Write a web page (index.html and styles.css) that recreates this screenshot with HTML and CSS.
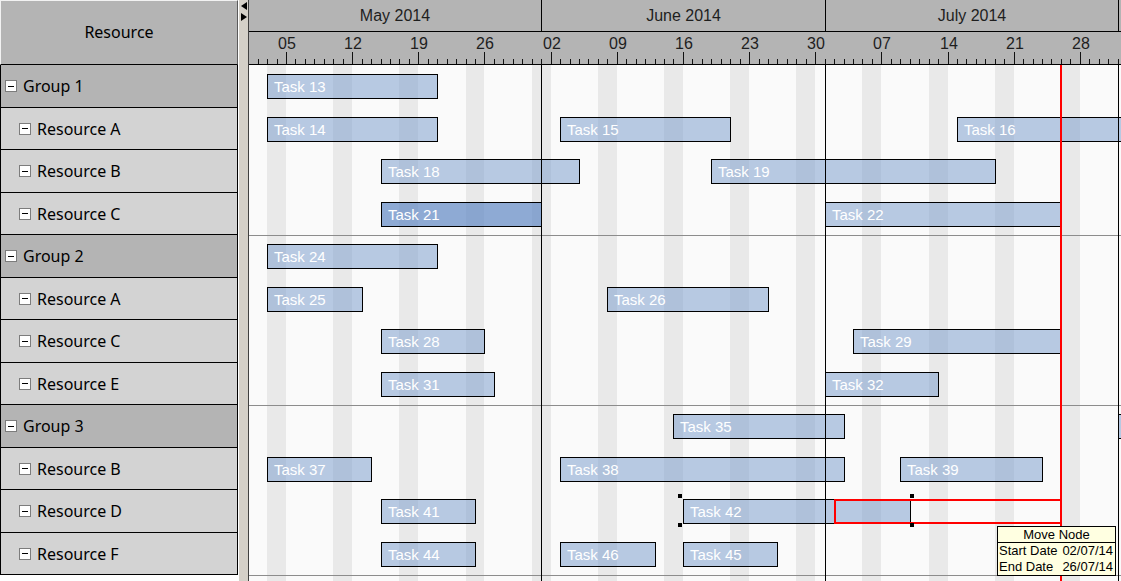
FILE: index.html
```html
<!DOCTYPE html>
<html lang="en">
<head>
<meta charset="utf-8">
<title>Resource Gantt</title>
<link rel="stylesheet" href="styles.css">
</head>
<body>
<div class="gantt">
  <div class="left">
    <div class="left-head">Resource</div>
    <div class="tree">
      <div class="row group"><span class="tog"></span>Group 1</div>
      <div class="row res"><span class="tog"></span>Resource A</div>
      <div class="row res"><span class="tog"></span>Resource B</div>
      <div class="row res"><span class="tog"></span>Resource C</div>
      <div class="row group"><span class="tog"></span>Group 2</div>
      <div class="row res"><span class="tog"></span>Resource A</div>
      <div class="row res"><span class="tog"></span>Resource C</div>
      <div class="row res"><span class="tog"></span>Resource E</div>
      <div class="row group"><span class="tog"></span>Group 3</div>
      <div class="row res"><span class="tog"></span>Resource B</div>
      <div class="row res"><span class="tog"></span>Resource D</div>
      <div class="row res"><span class="tog"></span>Resource F</div>
    </div>
  </div>

  <div class="splitter"><span class="arr arr-l"></span><span class="arr arr-r"></span></div>

  <div class="chart">
    <div class="months">
      <div class="month m-may">May 2014</div>
      <div class="month m-jun">June 2014</div>
      <div class="month m-jul">July 2014</div>
      <div class="month m-aug"></div>
    </div>
    <div class="days">
      <svg class="ticks" width="872" height="32" viewBox="0 0 872 32" shape-rendering="crispEdges">
        <path stroke="#111" stroke-width="1" fill="none" d="M9.5 27v5M18.5 27v5M28.5 27v5M46.5 27v5M56.5 27v5M65.5 27v5M75.5 27v5M84.5 27v5M94.5 27v5M113.5 27v5M122.5 27v5M132.5 27v5M141.5 27v5M150.5 27v5M160.5 27v5M179.5 27v5M188.5 27v5M198.5 27v5M207.5 27v5M217.5 27v5M226.5 27v5M245.5 27v5M254.5 27v5M264.5 27v5M273.5 27v5M283.5 27v5M292.5 27v5M311.5 27v5M321.5 27v5M330.5 27v5M339.5 27v5M349.5 27v5M358.5 27v5M377.5 27v5M387.5 27v5M396.5 27v5M406.5 27v5M415.5 27v5M424.5 27v5M443.5 27v5M453.5 27v5M462.5 27v5M472.5 27v5M481.5 27v5M491.5 27v5M510.5 27v5M519.5 27v5M528.5 27v5M538.5 27v5M547.5 27v5M557.5 27v5M576.5 27v5M585.5 27v5M595.5 27v5M604.5 27v5M613.5 27v5M623.5 27v5M642.5 27v5M651.5 27v5M661.5 27v5M670.5 27v5M680.5 27v5M689.5 27v5M708.5 27v5M717.5 27v5M727.5 27v5M736.5 27v5M746.5 27v5M755.5 27v5M774.5 27v5M784.5 27v5M793.5 27v5M802.5 27v5M812.5 27v5M821.5 27v5M840.5 27v5M850.5 27v5M859.5 27v5M869.5 27v5M37.5 20v12M103.5 20v12M169.5 20v12M235.5 20v12M302.5 20v12M368.5 20v12M434.5 20v12M500.5 20v12M566.5 20v12M632.5 20v12M699.5 20v12M765.5 20v12M831.5 20v12"/>
      </svg>
      <span class="day" style="left:38px">05</span>
      <span class="day" style="left:104px">12</span>
      <span class="day" style="left:170px">19</span>
      <span class="day" style="left:236px">26</span>
      <span class="day" style="left:303px">02</span>
      <span class="day" style="left:369px">09</span>
      <span class="day" style="left:435px">16</span>
      <span class="day" style="left:501px">23</span>
      <span class="day" style="left:567px">30</span>
      <span class="day" style="left:633px">07</span>
      <span class="day" style="left:700px">14</span>
      <span class="day" style="left:766px">21</span>
      <span class="day" style="left:832px">28</span>
    </div>

    <div class="body">
      <svg class="bands" width="872" height="516" viewBox="0 0 872 516" shape-rendering="crispEdges">
        <g fill="#e9e9e9">
          <rect x="18" y="0" width="19" height="516"/>
          <rect x="84" y="0" width="19" height="516"/>
          <rect x="150" y="0" width="19" height="516"/>
          <rect x="217" y="0" width="18" height="516"/>
          <rect x="283" y="0" width="19" height="516"/>
          <rect x="349" y="0" width="19" height="516"/>
          <rect x="415" y="0" width="19" height="516"/>
          <rect x="481" y="0" width="19" height="516"/>
          <rect x="547" y="0" width="19" height="516"/>
          <rect x="613" y="0" width="19" height="516"/>
          <rect x="680" y="0" width="19" height="516"/>
          <rect x="746" y="0" width="19" height="516"/>
          <rect x="812" y="0" width="19" height="516"/>
        </g>
      </svg>

      <div class="lane">
        <div class="bar" style="left:18px;width:171px">Task 13</div>
      </div>
      <div class="lane">
        <div class="bar" style="left:18px;width:171px">Task 14</div>
        <div class="bar" style="left:311px;width:171px">Task 15</div>
        <div class="bar" style="left:708px;width:200px">Task 16</div>
      </div>
      <div class="lane">
        <div class="bar" style="left:132px;width:199px">Task 18</div>
        <div class="bar" style="left:462px;width:285px">Task 19</div>
      </div>
      <div class="lane">
        <div class="bar sel" style="left:132px;width:161px">Task 21</div>
        <div class="bar" style="left:576px;width:236px">Task 22</div>
      </div>
      <div class="lane sep">
        <div class="bar" style="left:18px;width:171px">Task 24</div>
      </div>
      <div class="lane">
        <div class="bar" style="left:18px;width:96px">Task 25</div>
        <div class="bar" style="left:358px;width:162px">Task 26</div>
      </div>
      <div class="lane">
        <div class="bar" style="left:132px;width:104px">Task 28</div>
        <div class="bar" style="left:604px;width:208px">Task 29</div>
      </div>
      <div class="lane">
        <div class="bar" style="left:132px;width:114px">Task 31</div>
        <div class="bar" style="left:576px;width:114px">Task 32</div>
      </div>
      <div class="lane sep">
        <div class="bar" style="left:424px;width:172px">Task 35</div>
        <div class="bar" style="left:869px;width:40px"></div>
      </div>
      <div class="lane">
        <div class="bar" style="left:18px;width:105px">Task 37</div>
        <div class="bar" style="left:311px;width:285px">Task 38</div>
        <div class="bar" style="left:651px;width:143px">Task 39</div>
      </div>
      <div class="lane">
        <div class="bar" style="left:132px;width:95px">Task 41</div>
        <div class="bar" style="left:434px;width:228px">Task 42</div>
        <div class="ghost" style="left:585px;width:228px"></div>
        <span class="handle" style="left:429px;top:4px"></span>
        <span class="handle" style="left:429px;top:33px"></span>
        <span class="handle" style="left:661px;top:4px"></span>
        <span class="handle" style="left:661px;top:33px"></span>
      </div>
      <div class="lane">
        <div class="bar" style="left:132px;width:95px">Task 44</div>
        <div class="bar" style="left:311px;width:96px">Task 46</div>
        <div class="bar" style="left:434px;width:95px">Task 45</div>
      </div>
      <div class="lanes-end"></div>

      <svg class="lines" width="872" height="516" viewBox="0 0 872 516" shape-rendering="crispEdges">
        <path stroke="#000" stroke-width="1" d="M292.5 0v516M576.5 0v516M869.5 0v516"/>
        <rect x="811" y="0" width="2" height="516" fill="#ff0000"/>
      </svg>

      <div class="tip">
        <div class="tip-title">Move Node</div>
        <div class="tip-row"><span>Start Date</span><span>02/07/14</span></div>
        <div class="tip-row"><span>End Date</span><span>26/07/14</span></div>
      </div>
    </div>
  </div>
</div>
</body>
</html>
```

FILE: styles.css
```css
* { box-sizing: border-box; }
html, body { margin: 0; padding: 0; }
body {
  width: 1121px;
  height: 581px;
  overflow: hidden;
  background: #fff;
}

.gantt {
  display: flex;
  width: 1121px;
  height: 581px;
}

/* ---------- left resource tree ---------- */
.left {
  width: 238px;
  flex: none;
  display: flex;
  flex-direction: column;
  background: #fff;
  font-family: "Noto Sans", "DejaVu Sans", sans-serif;
  font-size: 16px;
  color: #000;
}
.left-head {
  height: 65px;
  flex: none;
  display: flex;
  align-items: center;
  justify-content: center;
  background: #b4b4b4;
  border-top: 1px solid #f2f2f2;
  border-left: 1px solid #f2f2f2;
  border-right: 1px solid #5a5a5a;
  border-bottom: 1px solid #000;
  padding-bottom: 2px;
}
.tree {
  border-left: 1px solid #000;
  border-right: 1px solid #000;
}
.row {
  height: 42.5px;
  display: flex;
  align-items: center;
  gap: 6px;
  border-bottom: 1px solid #000;
  white-space: nowrap;
  padding-top: 1px;
}
.row.group {
  background: #b4b4b4;
  padding-left: 4px;
}
.row.res {
  background: #d3d3d3;
  padding-left: 18px;
}
.tog {
  width: 12px;
  height: 12px;
  flex: none;
  border: 1px solid #7c7c7c;
  background: #fff;
  display: flex;
  align-items: center;
  justify-content: center;
}
.tog::after {
  content: "";
  width: 6px;
  height: 1px;
  background: #000;
}

/* ---------- splitter ---------- */
.splitter {
  width: 10px;
  flex: none;
  background: #d4d0c8;
  border-left: 1px solid #fff;
  display: flex;
  flex-direction: column;
  align-items: flex-start;
  padding: 2px 0 0 2px;
  gap: 3px;
}
.arr {
  width: 0;
  height: 0;
  border-top: 4.5px solid transparent;
  border-bottom: 4.5px solid transparent;
}
.arr-l { border-right: 6px solid #000; }
.arr-r { border-left: 6px solid #000; }

/* ---------- chart ---------- */
.chart {
  flex: 1;
  min-width: 0;
  display: flex;
  flex-direction: column;
  border-left: 1px solid #404040;
  font-family: "Liberation Sans", Arial, sans-serif;
}
.months {
  height: 32px;
  flex: none;
  display: flex;
  background: #b4b4b4;
  border-bottom: 1px solid #000;
}
.month {
  flex: none;
  border-right: 1px solid #000;
  text-align: center;
  font-size: 16px;
  line-height: 31px;
  color: #1e1e1e;
  white-space: nowrap;
}
.m-may { width: 293px; }
.m-jun { width: 284px; }
.m-jul { width: 293px; }
.m-aug { flex: 1; border-right: 0; }

.days {
  height: 33px;
  flex: none;
  position: relative;
  background: #b4b4b4;
  border-bottom: 1px solid #000;
}
.ticks {
  position: absolute;
  left: 0;
  top: 0;
  display: block;
}
.day {
  position: absolute;
  top: 4px;
  font-size: 16px;
  line-height: 16px;
  color: #1e1e1e;
  transform: translateX(-50%);
}

.body {
  flex: 1;
  position: relative;
  overflow: hidden;
  background: #fafafa;
}
.bands {
  position: absolute;
  left: 0;
  top: 0;
  display: block;
}
.lane {
  height: 42.5px;
  position: relative;
}
.lane.sep {
  box-shadow: inset 0 1px 0 #8c8c8c;
}
.lanes-end {
  height: 1px;
  position: relative;
  background: #8c8c8c;
}

.bar {
  position: absolute;
  top: 9px;
  height: 25px;
  border: 1px solid #000;
  background: rgba(128, 160, 206, 0.55);
  color: #fff;
  font-size: 15px;
  line-height: 23px;
  padding-left: 6px;
  white-space: nowrap;
  overflow: hidden;
}
.bar.sel {
  background: rgba(95, 135, 195, 0.7);
}
.ghost {
  position: absolute;
  top: 9px;
  height: 25px;
  border: 2px solid #ff0000;
}
.handle {
  position: absolute;
  width: 4px;
  height: 4px;
  background: #000;
}

.lines {
  position: absolute;
  left: 0;
  top: 0;
  display: block;
  pointer-events: none;
}

.tip {
  position: absolute;
  left: 748px;
  top: 461px;
  width: 119px;
  border: 1px solid #000;
  background: #ffffe1;
  font-size: 13px;
  color: #000;
}
.tip-title {
  text-align: center;
  line-height: 15px;
  border-bottom: 1px solid #000;
}
.tip-row {
  display: flex;
  justify-content: space-between;
  line-height: 16px;
  padding: 0 2px 0 1px;
  white-space: nowrap;
}
```
